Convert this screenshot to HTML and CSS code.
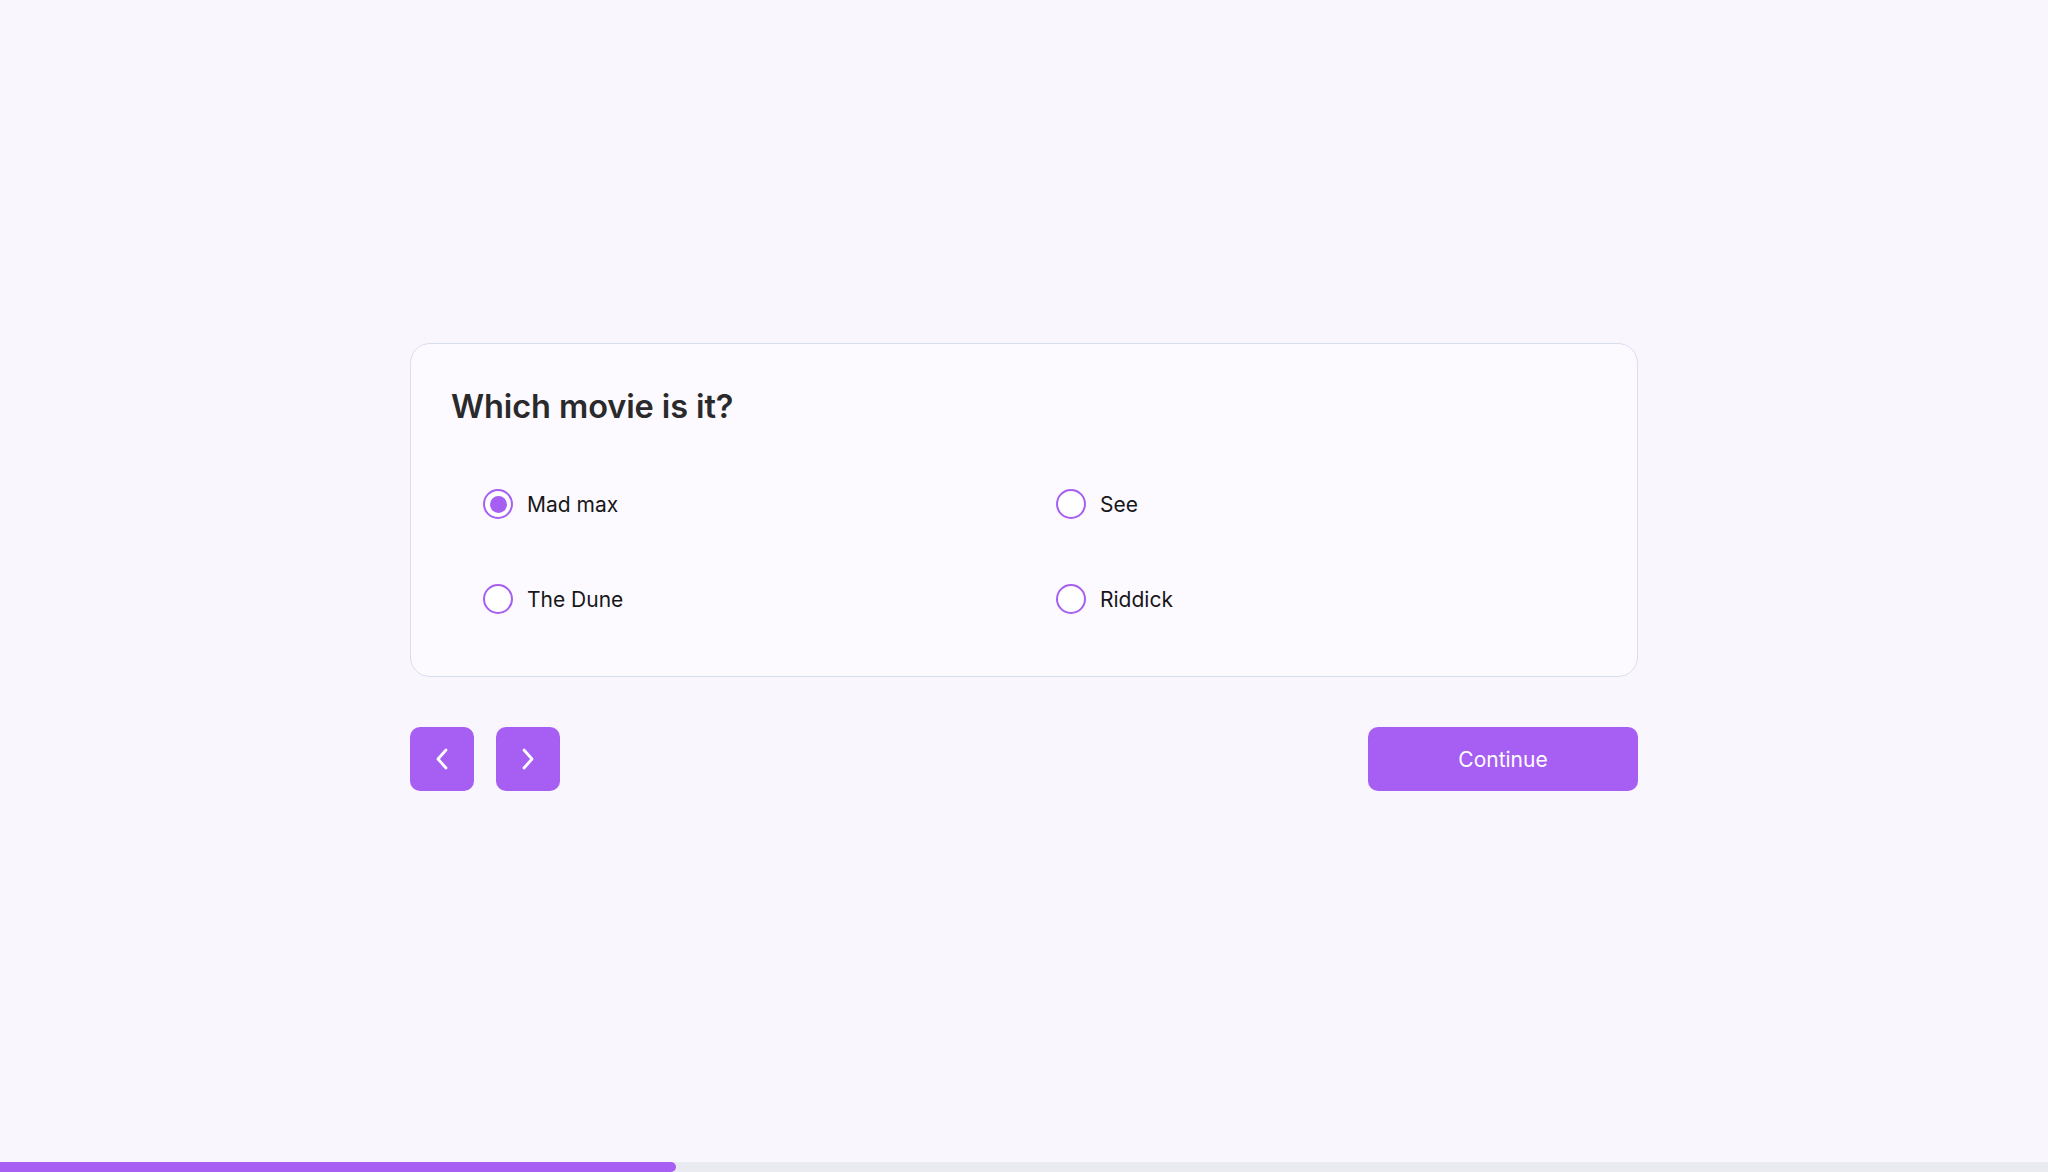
FILE: index.html
```html
<!DOCTYPE html>
<html lang="en">
<head>
<meta charset="utf-8">
<title>Quiz</title>
<link rel="stylesheet" href="styles.css">
</head>
<body>
<div class="page">
  <main class="quiz">
    <section class="card">
      <h1 class="question">Which movie is it?</h1>
      <div class="options">
        <label class="option">
          <span class="radio checked"><span class="dot"></span></span>
          <span class="label">Mad max</span>
        </label>
        <label class="option">
          <span class="radio"></span>
          <span class="label">See</span>
        </label>
        <label class="option">
          <span class="radio"></span>
          <span class="label">The Dune</span>
        </label>
        <label class="option">
          <span class="radio"></span>
          <span class="label">Riddick</span>
        </label>
      </div>
    </section>
    <div class="controls">
      <div class="nav">
        <button class="nav-btn" aria-label="Previous">
          <svg width="14" height="22" viewBox="0 0 14 22"><path d="M11 2 L3 11 L11 20" fill="none" stroke="#fff" stroke-width="2.8" stroke-linecap="round" stroke-linejoin="round"/></svg>
        </button>
        <button class="nav-btn" aria-label="Next">
          <svg width="14" height="22" viewBox="0 0 14 22"><path d="M3 2 L11 11 L3 20" fill="none" stroke="#fff" stroke-width="2.8" stroke-linecap="round" stroke-linejoin="round"/></svg>
        </button>
      </div>
      <button class="continue">Continue</button>
    </div>
  </main>
  <div class="progress"><div class="progress-fill" style="width:33%"></div></div>
</div>
</body>
</html>
```

FILE: styles.css
```css
* { box-sizing: border-box; }
html, body { margin: 0; padding: 0; }
body {
  background: #f9f6fd;
  font-family: Inter, "Noto Sans", "Liberation Sans", sans-serif;
  color: #1b1b1f;
}
.page {
  height: 100vh;
  display: flex;
  flex-direction: column;
}
.quiz {
  flex: 1;
  width: 1228px;
  margin: 0 auto;
  padding-top: 343px;
}
.card {
  background: #fcfaff;
  border: 1.5px solid #d8def0;
  border-radius: 20px;
  padding: 43px 40px 62px 40px;
}
.question {
  margin: 0;
  font-size: 32.5px;
  font-weight: 600;
  line-height: 1.21;
  color: #2a2a2c;
  letter-spacing: -0.1px;
}
.options {
  display: grid;
  grid-template-columns: 573px 1fr;
  row-gap: 65px;
  margin-top: 63px;
  padding-left: 32px;
}
.option {
  display: flex;
  align-items: center;
  gap: 14px;
  height: 30px;
}
.radio {
  width: 30px;
  height: 30px;
  border: 2.6px solid #a75ef2;
  border-radius: 50%;
  display: flex;
  align-items: center;
  justify-content: center;
  background: #fff;
}
.dot {
  width: 17px;
  height: 17px;
  border-radius: 50%;
  background: #a75ef2;
}
.label {
  font-size: 21px;
  font-weight: 400;
  color: #17171a;
}
.controls {
  display: flex;
  justify-content: space-between;
  align-items: center;
  margin-top: 50px;
}
.nav {
  display: flex;
  gap: 22px;
}
.nav-btn {
  width: 64px;
  height: 64px;
  border: none;
  border-radius: 10px;
  background: #a75ef2;
  display: flex;
  align-items: center;
  justify-content: center;
  padding: 0;
}
.continue {
  width: 270px;
  height: 64px;
  border: none;
  border-radius: 10px;
  background: #a75ef2;
  color: #fff;
  font-family: Inter, "Noto Sans", "Liberation Sans", sans-serif;
  font-size: 21px;
  font-weight: 400;
}
.progress {
  height: 10px;
  background: #eaebf1;
}
.progress-fill {
  height: 100%;
  background: #a75ef2;
  border-radius: 0 6px 6px 0;
}
```
